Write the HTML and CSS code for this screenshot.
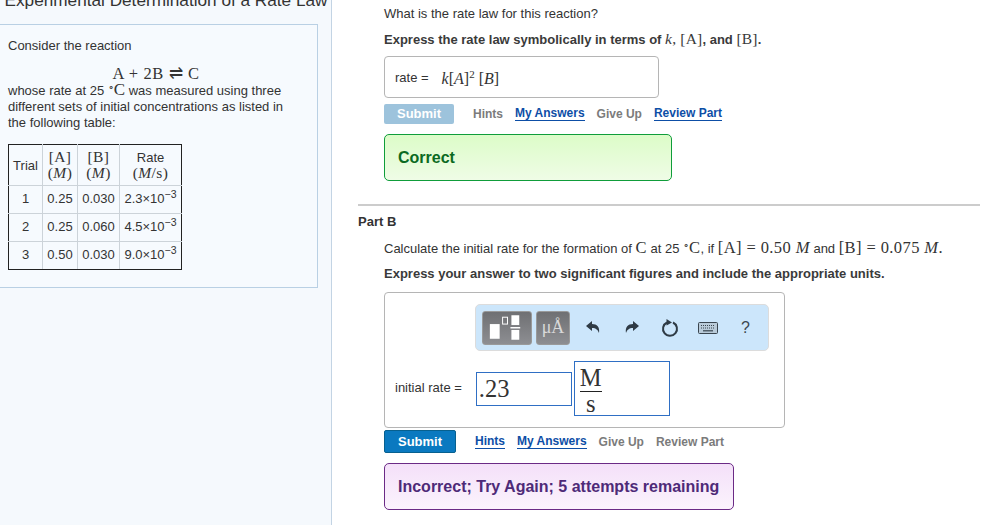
FILE: index.html
```html
<!DOCTYPE html>
<html lang="en">
<head>
<meta charset="utf-8">
<title>Experimental Determination of a Rate Law</title>
<link rel="stylesheet" href="styles.css">
</head>
<body>
<div class="page">
  <aside class="side">
    <h1 class="title">: Experimental Determination of a Rate Law</h1>
    <div class="infobox">
      <p class="intro">Consider the reaction</p>
      <div class="equation">A + 2B ⇌ C</div>
      <p class="desc">whose rate at 25 <sup class="deg">∘</sup><span class="m big">C</span> was measured using three different sets of initial concentrations as listed in the following table:</p>
      <table class="data">
        <colgroup><col class="c1"><col class="c2"><col class="c3"><col class="c4"></colgroup>
        <tr class="head">
          <th>Trial</th>
          <th><span class="m">[A]</span><br><span class="m">(<i>M</i>)</span></th>
          <th><span class="m">[B]</span><br><span class="m">(<i>M</i>)</span></th>
          <th>Rate<br><span class="m">(<i>M</i>/s)</span></th>
        </tr>
        <tr><td>1</td><td>0.25</td><td>0.030</td><td>2.3×10<sup>−3</sup></td></tr>
        <tr><td>2</td><td>0.25</td><td>0.060</td><td>4.5×10<sup>−3</sup></td></tr>
        <tr><td>3</td><td>0.50</td><td>0.030</td><td>9.0×10<sup>−3</sup></td></tr>
      </table>
    </div>
  </aside>
  <main class="main">
    <section class="part parta">
      <p class="q">What is the rate law for this reaction?</p>
      <p class="strong">Express the rate law symbolically in terms of <span class="m mbig"><i>k</i>, [A]</span>, and <span class="m mbig">[B]</span>.</p>
      <div class="answer-a">
        <span class="label">rate =</span>
        <span class="m formula"><i>k</i>[<i>A</i>]<sup>2</sup> [<i>B</i>]</span>
      </div>
      <div class="actions">
        <span class="btn btn-off">Submit</span>
        <span class="links"><span class="grey">Hints</span><a class="link">My Answers</a><span class="grey">Give Up</span><a class="link">Review Part</a></span>
      </div>
      <div class="msg ok">Correct</div>
    </section>
    <hr class="rule">
    <h2 class="partb">Part B</h2>
    <section class="part">
      <p class="calc">Calculate the initial rate for the formation of <span class="m mbig">C</span> at 25 <sup class="deg">∘</sup><span class="m mbig">C</span>, if <span class="m mbig">[A] = 0.50 <i>M</i></span> and <span class="m mbig">[B] = 0.075 <i>M</i>.</span></p>
      <p class="strong s2">Express your answer to two significant figures and include the appropriate units.</p>
      <div class="answer-b">
        <div class="toolbar">
          <span class="tool t1">
            <svg width="49" height="33" viewBox="0 0 49 33"><rect x="7" y="13" width="10" height="15" fill="#fff"/><rect x="20" y="6" width="5" height="7" fill="none" stroke="#fff"/><rect x="29" y="4" width="8" height="10" fill="#fff"/><rect x="28" y="16" width="10" height="1.5" fill="#fff"/><rect x="29" y="19" width="8" height="10" fill="#fff"/></svg>
          </span>
          <span class="tool t2">μÅ</span>
          <svg class="ico i-undo" width="16" height="15" viewBox="0 0 16 15"><path d="M1 6 L7 1 V4 C12 4 15 7 14 13 C13 10 11 8 7 8 V11 Z" fill="#2f3b45"/></svg>
          <svg class="ico i-redo" width="16" height="15" viewBox="0 0 16 15"><path d="M15 6 L9 1 V4 C4 4 1 7 2 13 C3 10 5 8 9 8 V11 Z" fill="#2f3b45"/></svg>
          <svg class="ico i-reset" width="18" height="19" viewBox="0 0 18 19"><path d="M6 4.5 A7 7 0 1 0 12 4.5" fill="none" stroke="#2f3b45" stroke-width="2"/><path d="M5.5 1 L11 4.5 L5.5 7.5 Z" fill="#2f3b45"/></svg>
          <svg class="ico i-kbd" width="20" height="12" viewBox="0 0 20 12"><rect x="0.5" y="0.5" width="19" height="11" rx="1" fill="#b9cbd9" stroke="#39454f"/><path d="M3 3.5H17M3 6H17" stroke="#39454f" stroke-dasharray="1 1"/><path d="M5 8.8H15" stroke="#39454f" stroke-width="1.2"/></svg>
          <span class="help">?</span>
        </div>
        <div class="entry">
          <span class="label label-up">initial rate =</span>
          <span class="value">.23</span>
          <span class="units"><span class="frac"><span class="num">M</span><span class="den">s</span></span></span>
        </div>
      </div>
      <div class="actions a2">
        <span class="btn btn-on">Submit</span>
        <span class="links"><a class="link">Hints</a><a class="link">My Answers</a><span class="grey">Give Up</span><span class="grey">Review Part</span></span>
      </div>
      <div class="msg bad">Incorrect; Try Again; 5 attempts remaining</div>
    </section>
  </main>
</div>
</body>
</html>
```
FILE: styles.css
```css
* { box-sizing: border-box; }
html, body { margin: 0; padding: 0; background: #fff; }
body { font-family: "Liberation Sans", Arial, sans-serif; color: #333; font-size: 13px; }
p, h1, h2 { margin: 0; }
.page { display: flex; width: 985px; height: 525px; overflow: hidden; }
.m { font-family: "Liberation Serif", "Times New Roman", serif; }

.side { width: 332px; flex: none; height: 525px; background: #f5f9fd; border-right: 1px solid #c3d4e4; }
.title { font-size: 17.2px; font-weight: 400; line-height: 20px; margin-top: -10px; margin-left: -5px; white-space: nowrap; color: #333; }
.infobox { margin-top: 14px; width: 318px; height: 264px; background: #f6fafe; border: 1px solid #b9d0e4; border-left: 0; padding: 13px 0 0 8px; }
.intro { line-height: 15px; }
.equation { font-family: "Liberation Serif", serif; font-size: 16.5px; letter-spacing: 0.6px; line-height: 17px; text-align: center; margin-top: 12px; width: 296px; }
.desc { width: 285px; line-height: 16px; margin-top: 1px; }
.deg { font-size: 10px; line-height: 0; vertical-align: 5px; }
.big { font-size: 17px; line-height: 0; }
.data { border-collapse: collapse; table-layout: fixed; margin: 13px 0 0 0; border: 1px solid #222; background: #f6fafe; width: 173px; }
.c1 { width: 34px; }
.c2 { width: 35px; }
.c3 { width: 42px; }
.c4 { width: 62px; }
.data th, .data td { border: 1px solid #ccd3d9; padding: 0; text-align: center; font-weight: 400; white-space: nowrap; }
.data tr > :first-child { border-left: 1px solid #222; }
.data tr > :last-child { border-right: 1px solid #222; }
.data tr:last-child td { border-bottom: 1px solid #222; }
.data tr.head th { border-top: 1px solid #222; }
.data tr.head { height: 41px; line-height: 15px; }
.data tr.head .m { font-size: 15.5px; letter-spacing: 0.4px; }
.data td { height: 28px; padding-bottom: 2px; }
.data sup { font-size: 10.5px; line-height: 0; vertical-align: 5px; }

.main { flex: 1; padding: 0 5px 0 26px; min-width: 0; }
.part { padding-left: 26px; }
.q { margin-top: 6px; line-height: 16px; }
.strong { font-weight: 700; line-height: 16px; margin-top: 10px; white-space: nowrap; font-size: 13px; color: #3a3a3a; }
.mbig { font-size: 16.5px; font-weight: 400; line-height: 0; letter-spacing: 0.4px; }
.strong .mbig { font-size: 15.5px; letter-spacing: 0.2px; }
.answer-a { margin-top: 8px; width: 275px; height: 42px; border: 1px solid #b5b5b5; border-radius: 4px; display: flex; align-items: center; padding: 0 10px; }
.formula { font-size: 16px; margin-left: 13px; line-height: 0; }
.formula sup { font-size: 11px; line-height: 0; }
.actions { display: flex; align-items: center; margin-top: 6px; height: 20px; }
.btn { width: 70px; height: 20px; border-radius: 2px; color: #fff; font-weight: 700; font-size: 13px; line-height: 20px; text-align: center; }
.btn-off { background: #9dc3dc; }
.btn-on { width: 72px; height: 23px; line-height: 22px; background: #0a79c0; border: 1px solid #07608f; }
.links { display: flex; gap: 12px; margin-left: 19px; font-weight: 700; font-size: 12px; }
.grey { color: #7b7b7b; }
.link { color: #0d4ea6; border-bottom: 1px solid #0d4ea6; line-height: 13px; }
.msg { border-radius: 5px; font-weight: 700; font-size: 16px; display: flex; align-items: center; padding: 0 13px; }
.ok { width: 288px; height: 47px; margin-top: 10px; border: 1px solid #0f9d3a; color: #0b6a22; background: linear-gradient(#dcfcc8, #effce6); }
.bad { width: 350px; height: 47px; margin-top: 10px; border: 1px solid #6b2a86; color: #4e2a78; background: linear-gradient(#f4e0f9, #fbf3fd); }
.rule { border: 0; height: 2px; background: #cccccc; margin: 23px 0 0 0; }
.partb { font-size: 13px; font-weight: 700; line-height: 15px; margin-top: 8px; color: #333; }
.calc { margin-top: 12px; line-height: 16px; white-space: nowrap; }
.s2 { margin-top: 9px; }
.answer-b { margin-top: 10px; width: 401px; height: 136px; border: 1px solid #b5b5b5; border-radius: 4px; padding-top: 11px; }
.toolbar { margin-left: 90px; width: 294px; height: 47px; border-radius: 5px; background: #cce6fb; border: 1px solid #dcdcdc; display: flex; align-items: center; padding-left: 6px; }
.tool { height: 34px; border-radius: 3px; background: linear-gradient(#6f7073, #8d8e92); border: 1px solid #9a9a9a; display: flex; align-items: center; justify-content: center; color: #d9d9d9; }
.t1 { width: 50px; }
.t2 { width: 34px; margin-left: 4px; font-family: "Liberation Serif", serif; font-size: 18px; }
.ico { flex: none; }
.i-undo { margin-left: 15px; }
.i-redo { margin-left: 23px; }
.i-reset { margin-left: 21px; }
.i-kbd { margin-left: 19px; }
.help { margin-left: 23px; font-size: 16px; color: #3c4650; }
.entry { display: flex; align-items: center; margin-top: 10px; padding-left: 10px; }
.label-up { margin-bottom: 2px; }
.value { width: 96px; height: 34px; border: 1px solid #2f6fc4; margin-left: 14px; font-family: "Liberation Serif", serif; font-size: 24.5px; line-height: 32px; padding-left: 2px; color: #333; }
.units { width: 96px; height: 55px; border: 1px solid #2f6fc4; margin-left: 2px; padding: 3px 0 0 5px; font-family: "Liberation Serif", serif; }
.frac { display: inline-flex; flex-direction: column; align-items: center; font-size: 24.5px; }
.num { border-bottom: 1px solid #222; line-height: 26px; height: 27px; }
.den { line-height: 24px; }
.a2 { margin-top: 2px; height: 23px; }
```
